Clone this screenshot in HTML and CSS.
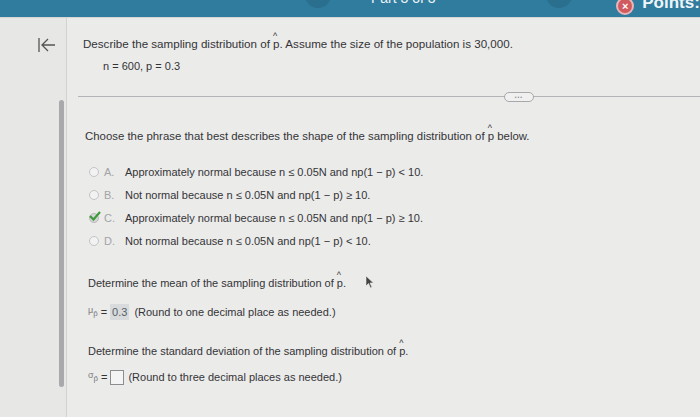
FILE: index.html
```html
<!DOCTYPE html>
<html>
<head>
<meta charset="utf-8">
<link rel="stylesheet" href="styles.css">
</head>
<body>
<div class="topbar">
  <span class="dot dot-left"></span>
  <span class="part">Part 3 of 3</span>
  <span class="dot dot-right"></span>
  <span class="points"><span class="xmark">×</span>Points: 0</span>
</div>
<div class="main">
  <div class="gutter">
    <svg class="back" width="20" height="20" viewBox="0 0 20 20">
      <path d="M2 3 V17 M18 10 H6 M11 4 L5 10 L11 16" fill="none" stroke="#555" stroke-width="1.3"/>
    </svg>
    <div class="scroll"></div>
  </div>
  <div class="content">
    <p class="q1">Describe the sampling distribution of <span class="phat">p</span>. Assume the size of the population is 30,000.</p>
    <p class="given">n = 600, p = 0.3</p>
    <div class="sep"><span class="pill">•••</span></div>
    <p class="q2">Choose the phrase that best describes the shape of the sampling distribution of <span class="phat">p</span> below.</p>
    <ul class="opts">
      <li><span class="radio"></span><span class="let">A.</span>Approximately normal because n ≤ 0.05N and np(1 − p) &lt; 10.</li>
      <li><span class="radio"></span><span class="let">B.</span>Not normal because n ≤ 0.05N and np(1 − p) ≥ 10.</li>
      <li><span class="radio checked"><svg class="check" width="12" height="10" viewBox="0 0 12 10"><path d="M1 5 L4.5 8.5 L11 1" fill="none" stroke="#3e9a3a" stroke-width="2.2"/></svg></span><span class="let">C.</span>Approximately normal because n ≤ 0.05N and np(1 − p) ≥ 10.</li>
      <li><span class="radio"></span><span class="let">D.</span>Not normal because n ≤ 0.05N and np(1 − p) &lt; 10.</li>
    </ul>
    <p class="q3">Determine the mean of the sampling distribution of <span class="phat">p</span>.<svg class="cursor" width="10" height="14" viewBox="0 0 10 14"><path d="M1 1 L1 11 L3.5 8.5 L5.5 13 L7 12.3 L5 8 L8.5 8 Z" fill="#444" stroke="#eee" stroke-width="0.6"/></svg></p>
    <p class="ans ans1"><span class="sym">μ<sub>p̂</sub></span> = <span class="filled">0.3</span> (Round to one decimal place as needed.)</p>
    <p class="q4">Determine the standard deviation of the sampling distribution of <span class="phat">p</span>.</p>
    <p class="ans ans2"><span class="sym">σ<sub>p̂</sub></span> = <span class="empty"></span> (Round to three decimal places as needed.)</p>
  </div>
</div>
</body>
</html>
```
FILE: styles.css
```css
html, body {
  margin: 0;
  padding: 0;
}
body {
  width: 700px;
  height: 417px;
  overflow: hidden;
  background: #e9e9e8;
  font-family: "Liberation Sans", Arial, sans-serif;
  font-size: 11px;
  color: #343437;
}
.topbar {
  height: 17px;
  background: #2f7c9e;
  display: flex;
  align-items: flex-start;
  overflow: hidden;
  color: #eef4f7;
  border-bottom: 1px solid #d6d6d6;
}
.dot {
  width: 26px;
  height: 26px;
  border-radius: 50%;
  background: #2a6f8e;
  margin-top: -18px;
}
.dot-left { margin-left: 305px; }
.part {
  margin-left: 40px;
  margin-top: -10px;
  font-size: 14px;
  line-height: 16px;
}
.dot-right { margin-left: 110px; }
.points {
  margin-left: auto;
  margin-top: -9px;
  font-size: 17px;
  line-height: 18px;
  font-weight: bold;
  white-space: nowrap;
  margin-right: -14px;
  display: flex;
  align-items: center;
}
.xmark {
  width: 14px;
  height: 14px;
  border-radius: 50%;
  background: #d05a5e;
  border: 2px solid #e7b6b9;
  color: #fff;
  font-size: 11px;
  line-height: 14px;
  text-align: center;
  margin-right: 8px;
  margin-top: 6px;
}
.main {
  display: flex;
  height: 399px;
}
.gutter {
  width: 66px;
  border-right: 1px solid #d2d2d2;
  background: #e7e7e6;
  display: flex;
  flex-direction: column;
  flex-shrink: 0;
}
.back {
  margin: 17px 0 0 37px;
}
.scroll {
  width: 5px;
  height: 287px;
  border-radius: 3px;
  background: #a9a9ab;
  margin: 45px 0 0 59px;
}
.content {
  flex: 1;
  padding-left: 16px;
  background: #ebebea;
}
p {
  margin: 0;
  line-height: 14px;
  white-space: nowrap;
}
.q1 { margin-top: 19px; font-size: 11.6px; }
.given { margin-top: 8px; padding-left: 20px; }
.phat {
  position: relative;
  display: inline-block;
}
.phat::before {
  content: "^";
  position: absolute;
  left: 0;
  top: -8px;
  font-size: 9px;
}
.sep {
  margin: 23px 0 0 -5px;
  height: 1px;
  background: #b4b4b6;
  position: relative;
}
.pill {
  position: absolute;
  left: 426px;
  top: -4px;
  width: 28px;
  height: 8px;
  border: 1px solid #a8a8aa;
  border-radius: 5px;
  background: #f0f0f0;
  font-size: 5px;
  line-height: 8px;
  text-align: center;
  color: #888;
  letter-spacing: 1px;
}
.q2 { margin-top: 32px; padding-left: 2px; font-size: 11.4px; }
.opts {
  list-style: none;
  margin: 22px 0 0 0;
  padding: 0 0 0 6px;
  display: flex;
  flex-direction: column;
  gap: 9px;
}
.opts li {
  display: flex;
  align-items: center;
  height: 14px;
  white-space: nowrap;
}
.radio {
  width: 8px;
  height: 8px;
  border: 1px solid #c4c4c6;
  border-radius: 50%;
  background: #f2f2f2;
  position: relative;
  margin-right: 5px;
}
.radio.checked { border-color: #b9b9bb; background: #d6d6d6; }
.check {
  position: absolute;
  left: -1px;
  top: -3px;
}
.let {
  color: #a3a3a6;
  width: 21px;
}
.q3 { margin-top: 28px; padding-left: 5px; position: relative; }
.cursor {
  position: absolute;
  left: 282px;
  top: -1px;
}
.ans {
  padding-left: 5px;
  display: flex;
  align-items: center;
  height: 16px;
}
.ans1 { margin-top: 14px; }
.ans2 { margin-top: 11px; }
.sym {
  font-size: 9px;
  color: #7a7a7e;
  margin-right: 3px;
}
.sym sub { font-size: 8px; }
.filled {
  background: #d8dadb;
  padding: 1px 2px;
  margin: 0 5px 0 3px;
  color: #55606a;
}
.empty {
  display: inline-block;
  width: 12px;
  height: 13px;
  border: 1px solid #8d8d90;
  background: #f4f4f4;
  margin: 0 4px 0 3px;
}
.q4 { margin-top: 24px; padding-left: 5px; }
```
